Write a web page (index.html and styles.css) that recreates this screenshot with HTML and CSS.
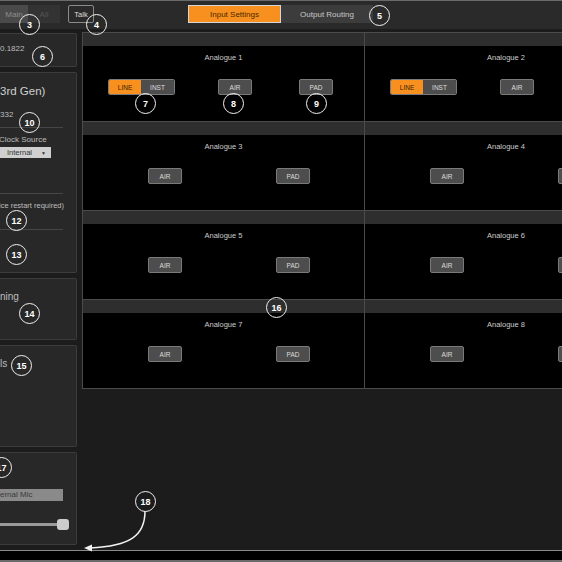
FILE: index.html
```html
<!DOCTYPE html>
<html>
<head>
<meta charset="utf-8">
<link rel="stylesheet" href="styles.css">
</head>
<body>
<div class="topbar">
  <div class="seg">
    <div class="seg-item seg-main">Main</div>
    <div class="seg-item seg-all">All</div>
  </div>
  <div class="talk">Talk</div>
  <div class="tabs">
    <div class="tab tab-active">Input Settings</div>
    <div class="tab tab-idle">Output Routing</div>
  </div>
</div>

<div class="workspace">
  <div class="sidebar">
    <div class="card card1">
      <div class="small t-version">0.1822</div>
    </div>
    <div class="card card2">
      <div class="big t-model">3rd Gen)</div>
      <div class="small t-serial">332</div>
      <div class="rule r1"></div>
      <div class="small t-clock">Clock Source</div>
      <div class="dropdown"><span>Internal</span><span class="arrow">▼</span></div>
      <div class="rule r2"></div>
      <div class="small t-restart">ice restart required)</div>
      <div class="rule r3"></div>
    </div>
    <div class="card card3">
      <div class="mid t-head">ning</div>
    </div>
    <div class="card card4">
      <div class="mid t-head">ls</div>
    </div>
    <div class="card card5">
      <div class="field">ernal Mic</div>
      <div class="slider"><div class="track"></div><div class="knob"></div></div>
    </div>
  </div>

  <div class="main">
    <div class="channels">
      <div class="cell col1">
        <div class="cell-head"></div>
        <div class="cell-body">
          <div class="title">Analogue 1</div>
          <div class="controls first">
            <div class="lineinst"><div class="li on">LINE</div><div class="li">INST</div></div>
            <div class="btn air1">AIR</div>
            <div class="btn pad1">PAD</div>
          </div>
        </div>
      </div>
      <div class="cell col2">
        <div class="cell-head"></div>
        <div class="cell-body">
          <div class="title">Analogue 2</div>
          <div class="controls first second">
            <div class="lineinst"><div class="li on">LINE</div><div class="li">INST</div></div>
            <div class="btn air1">AIR</div>
            <div class="btn pad1">PAD</div>
          </div>
        </div>
      </div>
      <div class="cell col1">
        <div class="cell-head"></div>
        <div class="cell-body">
          <div class="title">Analogue 3</div>
          <div class="controls plain"><div class="btn">AIR</div><div class="btn pad">PAD</div></div>
        </div>
      </div>
      <div class="cell col2">
        <div class="cell-head"></div>
        <div class="cell-body">
          <div class="title">Analogue 4</div>
          <div class="controls plain"><div class="btn">AIR</div><div class="btn pad">PAD</div></div>
        </div>
      </div>
      <div class="cell col1">
        <div class="cell-head"></div>
        <div class="cell-body">
          <div class="title">Analogue 5</div>
          <div class="controls plain"><div class="btn">AIR</div><div class="btn pad">PAD</div></div>
        </div>
      </div>
      <div class="cell col2">
        <div class="cell-head"></div>
        <div class="cell-body">
          <div class="title">Analogue 6</div>
          <div class="controls plain"><div class="btn">AIR</div><div class="btn pad">PAD</div></div>
        </div>
      </div>
      <div class="cell col1">
        <div class="cell-head"></div>
        <div class="cell-body">
          <div class="title">Analogue 7</div>
          <div class="controls plain"><div class="btn">AIR</div><div class="btn pad">PAD</div></div>
        </div>
      </div>
      <div class="cell col2">
        <div class="cell-head"></div>
        <div class="cell-body">
          <div class="title">Analogue 8</div>
          <div class="controls plain"><div class="btn">AIR</div><div class="btn pad">PAD</div></div>
        </div>
      </div>
    </div>
  </div>
</div>

<div class="bottombar"></div>

<svg class="arrow-layer" width="562" height="562" viewBox="0 0 562 562">
  <path d="M145 511 C145 536 130 546 90 548" fill="none" stroke="#f2f2f2" stroke-width="1.5"/>
  <polygon points="84,548 92,544.5 92,551.5" fill="#f2f2f2"/>
</svg>

<div class="badge b3">3</div>
<div class="badge b4">4</div>
<div class="badge b5">5</div>
<div class="badge b6">6</div>
<div class="badge b7">7</div>
<div class="badge b8">8</div>
<div class="badge b9">9</div>
<div class="badge b10">10</div>
<div class="badge b12">12</div>
<div class="badge b13">13</div>
<div class="badge b14">14</div>
<div class="badge b15">15</div>
<div class="badge b16">16</div>
<div class="badge b17">17</div>
<div class="badge b18">18</div>
</body>
</html>
```

FILE: styles.css
```css
* { box-sizing: border-box; }
html, body { margin: 0; padding: 0; }
body {
  width: 562px;
  height: 562px;
  overflow: hidden;
  position: relative;
  background: #1c1c1c;
  font-family: "Liberation Sans", Arial, sans-serif;
  color: #c8c8c8;
}

/* top bar */
.topbar {
  height: 29px;
  background: #2a2a2a;
  border-top: 1px solid #6a6a6a;
  display: flex;
  align-items: flex-start;
  padding-top: 4px;
}
.seg { display: flex; height: 18px; }
.seg-item { display: flex; align-items: center; justify-content: center; font-size: 8px; }
.seg-main { width: 28px; background: #4a4a4a; color: #8e8e8e; }
.seg-all { width: 32px; background: #333333; color: #555555; }
.talk {
  margin-left: 8px;
  width: 26px;
  height: 18px;
  border: 1px solid #8a8a8a;
  border-radius: 2px;
  font-size: 7.5px;
  color: #dddddd;
  display: flex;
  align-items: center;
  justify-content: center;
}
.tabs { margin-left: 94px; display: flex; height: 18px; }
.tab { display: flex; align-items: center; justify-content: center; font-size: 8px; }
.tab-active { width: 93px; background: #f7901e; color: #4a2800; border: 1px solid #d6d6d6; }
.tab-idle { width: 92px; background: #3c3c3c; color: #c8c8c8; }

/* workspace */
.workspace { display: flex; padding-top: 3px; }
.sidebar {
  width: 77px;
  flex-shrink: 0;
  padding-top: 1px;
  display: flex;
  flex-direction: column;
  gap: 5px;
}
.card {
  background: #282828;
  border: 1px solid #3c3c3c;
  border-left: none;
  border-radius: 0 2px 2px 0;
}
.card1 { height: 34px; }
.card2 { height: 201px; }
.card3 { height: 62px; }
.card4 { height: 102px; }
.card5 { height: 93px; }

.small { font-size: 8px; line-height: 10px; color: #bdbdbd; white-space: nowrap; }
.big { font-size: 11.5px; line-height: 14px; color: #d0d0d0; white-space: nowrap; }
.mid { font-size: 10px; line-height: 12px; color: #bdbdbd; white-space: nowrap; }

.t-version { margin-top: 10px; }
.t-model { margin-top: 11px; }
.t-serial { margin-top: 12px; }
.rule { width: 63px; height: 1px; background: #464646; }
.r1 { margin-top: 7px; }
.t-clock { margin-top: 7px; text-indent: -1px; }
.dropdown {
  margin-top: 2px;
  width: 51px;
  height: 11px;
  background: #cfcfcf;
  color: #333333;
  font-size: 7.5px;
  display: flex;
  align-items: center;
  justify-content: space-between;
  padding: 0 5px 0 7px;
}
.dropdown .arrow { font-size: 5px; }
.r2 { margin-top: 35px; }
.t-restart { margin-top: 7px; font-size: 7.5px; text-indent: -1px; }
.r3 { margin-top: 18px; }
.t-head { margin-top: 12px; }

.field {
  margin-top: 36px;
  width: 63px;
  height: 12px;
  background: #8a8a8a;
  color: #3a3a3a;
  font-size: 8px;
  line-height: 12px;
  white-space: nowrap;
}
.slider { margin-top: 18px; display: flex; align-items: center; height: 11px; }
.track { width: 60px; height: 3px; background: #9a9a9a; }
.knob { width: 12px; height: 11px; margin-left: -3px; background: #cccccc; border-radius: 3px; }

/* channels */
.main { margin-left: 5px; flex-shrink: 0; }
.channels {
  display: grid;
  grid-template-columns: 282px 282px;
  border-left: 1px solid #4b4b4b;
  border-top: 1px solid #4b4b4b;
}
.cell { border-bottom: 1px solid #4b4b4b; }
.col1 { border-right: 1px solid #4b4b4b; }
.cell-head { height: 13px; background: #2e2e2e; }
.cell-body { height: 75px; background: #000000; padding-top: 7px; }
.title { font-size: 7.5px; line-height: 9px; text-align: center; color: #cccccc; }

.controls { display: flex; margin-top: 17px; }
.controls.first { padding-left: 25px; }
.controls.second { padding-left: 25px; }
.controls.plain { padding-left: 65px; }

.lineinst { display: flex; height: 16px; border: 1px solid #7a7a7a; border-radius: 2px; overflow: hidden; }
.li {
  width: 33px;
  display: flex;
  align-items: center;
  justify-content: center;
  font-size: 6.5px;
  color: #dddddd;
  background: #4d4d4d;
}
.li.on { width: 32px; background: #f7901e; color: #3a2000; }

.btn {
  width: 34px;
  height: 16px;
  border: 1px solid #7a7a7a;
  border-radius: 2px;
  background: #4d4d4d;
  color: #dddddd;
  font-size: 6.5px;
  display: flex;
  align-items: center;
  justify-content: center;
}
.air1 { margin-left: 43px; }
.pad1 { margin-left: 47px; }
.pad { margin-left: 94px; }

/* bottom bar */
.bottombar {
  position: absolute;
  left: 0;
  top: 550px;
  width: 562px;
  height: 12px;
  background: #000000;
  border-top: 1px solid #8a8a8a;
  border-bottom: 2px solid #6a6a6a;
}

/* annotations */
.arrow-layer { position: absolute; left: 0; top: 0; pointer-events: none; }
.badge {
  position: absolute;
  width: 21px;
  height: 21px;
  border: 1.5px solid #f2f2f2;
  border-radius: 50%;
  color: #ffffff;
  font-weight: bold;
  font-size: 9px;
  display: flex;
  align-items: center;
  justify-content: center;
}
.b3 { left: 19px; top: 14px; }
.b4 { left: 86px; top: 14px; }
.b5 { left: 369px; top: 5px; }
.b6 { left: 32px; top: 46px; }
.b7 { left: 135px; top: 93px; }
.b8 { left: 223px; top: 93px; }
.b9 { left: 306px; top: 93px; }
.b10 { left: 19px; top: 112px; }
.b12 { left: 6px; top: 210px; }
.b13 { left: 6px; top: 244px; }
.b14 { left: 19px; top: 303px; }
.b15 { left: 11px; top: 355px; }
.b16 { left: 266px; top: 297px; }
.b17 { left: -9px; top: 457px; }
.b18 { left: 135px; top: 491px; }
```
